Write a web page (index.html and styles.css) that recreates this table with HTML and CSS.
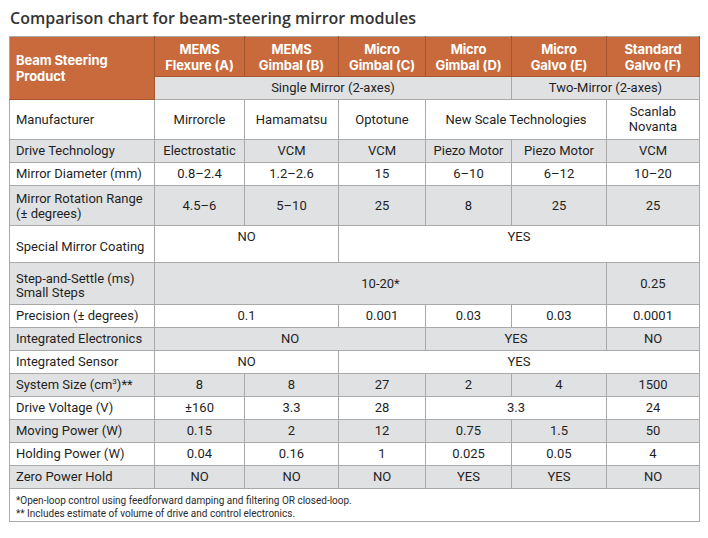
FILE: index.html
```html
<!DOCTYPE html>
<html lang="en">
<head>
<meta charset="utf-8">
<title>Comparison chart for beam-steering mirror modules</title>
<link rel="stylesheet" href="styles.css">
</head>
<body>
<h1 class="title">Comparison chart for beam-steering mirror modules</h1>
<table class="chart">
  <colgroup>
    <col class="c-label"><col class="c-a"><col class="c-b"><col class="c-c"><col class="c-d"><col class="c-e"><col class="c-f">
  </colgroup>
  <thead>
    <tr class="h1">
      <th class="hlabel" rowspan="2">Beam Steering<br>Product</th>
      <th>MEMS<br>Flexure (A)</th>
      <th>MEMS<br>Gimbal (B)</th>
      <th>Micro<br>Gimbal (C)</th>
      <th>Micro<br>Gimbal (D)</th>
      <th>Micro<br>Galvo (E)</th>
      <th>Standard<br>Galvo (F)</th>
    </tr>
    <tr class="h2">
      <td colspan="4">Single Mirror (2-axes)</td>
      <td colspan="2">Two-Mirror (2-axes)</td>
    </tr>
  </thead>
  <tbody>
    <tr class="r-manu">
      <td class="lbl">Manufacturer</td>
      <td>Mirrorcle</td><td>Hamamatsu</td><td>Optotune</td>
      <td colspan="2">New Scale Technologies</td>
      <td class="tight">Scanlab<br>Novanta</td>
    </tr>
    <tr class="alt">
      <td class="lbl">Drive Technology</td>
      <td>Electrostatic</td><td>VCM</td><td>VCM</td><td>Piezo Motor</td><td>Piezo Motor</td><td>VCM</td>
    </tr>
    <tr>
      <td class="lbl">Mirror Diameter (mm)</td>
      <td>0.8–2.4</td><td>1.2–2.6</td><td>15</td><td>6–10</td><td>6–12</td><td>10–20</td>
    </tr>
    <tr class="alt r-rot">
      <td class="lbl">Mirror Rotation Range<br>(± degrees)</td>
      <td>4.5–6</td><td>5–10</td><td>25</td><td>8</td><td>25</td><td>25</td>
    </tr>
    <tr class="r-coat">
      <td class="lbl">Special Mirror Coating</td>
      <td colspan="2" class="top">NO</td>
      <td colspan="4" class="top">YES</td>
    </tr>
    <tr class="alt r-step">
      <td class="lbl">Step-and-Settle (ms)<br>Small Steps</td>
      <td colspan="5">10-20*</td>
      <td>0.25</td>
    </tr>
    <tr>
      <td class="lbl">Precision (± degrees)</td>
      <td colspan="2">0.1</td><td>0.001</td><td>0.03</td><td>0.03</td><td>0.0001</td>
    </tr>
    <tr class="alt">
      <td class="lbl">Integrated Electronics</td>
      <td colspan="3">NO</td><td colspan="2">YES</td><td>NO</td>
    </tr>
    <tr>
      <td class="lbl">Integrated Sensor</td>
      <td colspan="2">NO</td><td colspan="4">YES</td>
    </tr>
    <tr class="alt">
      <td class="lbl">System Size (cm<sup>3</sup>)**</td>
      <td>8</td><td>8</td><td>27</td><td>2</td><td>4</td><td>1500</td>
    </tr>
    <tr>
      <td class="lbl">Drive Voltage (V)</td>
      <td>±160</td><td>3.3</td><td>28</td><td colspan="2">3.3</td><td>24</td>
    </tr>
    <tr class="alt">
      <td class="lbl">Moving Power (W)</td>
      <td>0.15</td><td>2</td><td>12</td><td>0.75</td><td>1.5</td><td>50</td>
    </tr>
    <tr>
      <td class="lbl">Holding Power (W)</td>
      <td>0.04</td><td>0.16</td><td>1</td><td>0.025</td><td>0.05</td><td>4</td>
    </tr>
    <tr class="alt">
      <td class="lbl">Zero Power Hold</td>
      <td>NO</td><td>NO</td><td>NO</td><td>YES</td><td>YES</td><td>NO</td>
    </tr>
  </tbody>
  <tfoot>
    <tr>
      <td colspan="7" class="notes">*Open-loop control using feedforward damping and filtering OR closed-loop.<br>** Includes estimate of volume of drive and control electronics.</td>
    </tr>
  </tfoot>
</table>
</body>
</html>
```

FILE: styles.css
```css
html, body {
  margin: 0;
  padding: 0;
  background: #ffffff;
}

body {
  padding: 8px 9px;
  font-family: "Roboto", "Liberation Sans", sans-serif;
  color: #1f1f1f;
}

.title {
  margin: 0 0 8px 1px;
  font-family: "Open Sans", "Liberation Sans", sans-serif;
  font-weight: 600;
  font-size: 16px;
  line-height: 20px;
  color: #333333;
}

.chart {
  width: 690px;
  border-collapse: collapse;
  table-layout: fixed;
  border: 1px solid #a9a9a9;
  font-size: 13px;
  line-height: 16px;
}

.c-label { width: 145px; }
.c-a { width: 90px; }
.c-b { width: 94px; }
.c-c { width: 87px; }
.c-d { width: 86px; }
.c-e { width: 95px; }
.c-f { width: 93px; }

.chart th,
.chart td {
  padding: 3px 4px;
  text-align: center;
  vertical-align: middle;
  border: 1px solid #a9a9a9;
}

.h1 th {
  background: #c86a3c;
  color: #ffffff;
  font-family: "Inter", "Roboto", sans-serif;
  font-weight: 700;
  font-size: 13px;
  line-height: 16px;
  height: 33px;
  border-color: #a5562f;
  border-top: 0;
  padding: 3px 2px;
  letter-spacing: -0.1px;
}

.h1 th.hlabel {
  text-align: left;
  padding-left: 6px;
  border-left: 0;
}

.h2 td {
  background: #e0e1e3;
  height: 16px;
  border-bottom-color: #a9a9a9;
}

.lbl {
  text-align: left !important;
  padding-left: 6px !important;
}

.alt td {
  background: #e0e1e3;
}

.r-manu td { height: 33px; }
.r-manu td.tight { line-height: 15px; padding: 1px 4px 3px; }
.r-rot td { height: 33px; line-height: 15px; }
.r-coat td { height: 29px; }
.r-coat td.lbl { padding-top: 6px; padding-bottom: 1px; }
.r-coat td.top { vertical-align: top; padding-top: 3px; }
.r-step td { height: 35px; line-height: 14px; }
.r-step td.lbl { padding-top: 5px; padding-bottom: 1px; }

sup {
  font-size: 8px;
  line-height: 0;
  vertical-align: 5px;
}

.notes {
  text-align: left !important;
  font-size: 10px;
  line-height: 13px;
  padding: 5px 6px 1px !important;
  color: #2b2b2b;
  background: #ffffff;
}
```
